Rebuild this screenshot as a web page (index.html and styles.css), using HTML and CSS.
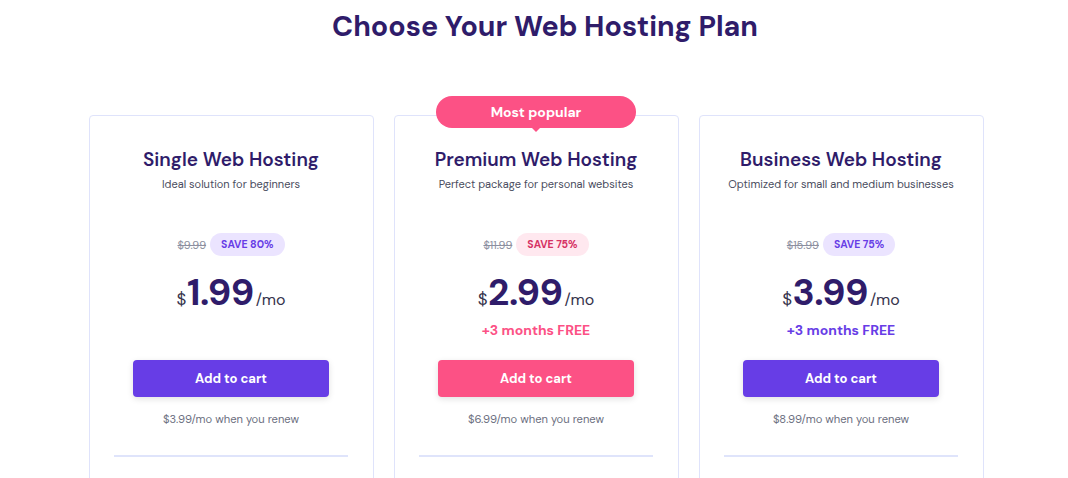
FILE: index.html
```html
<!DOCTYPE html>
<html lang="en">
  <head>
    <meta charset="UTF-8" />
    <meta name="viewport" content="width=device-width, initial-scale=1.0" />
    <title>Web Hosting Plans</title>
    <link rel="stylesheet" href="styles.css">
  </head>
  <body>
    <h1 class="page-title">Choose Your Web Hosting Plan</h1>

    <div class="plans">
      <div class="plan">
        <h2>Single Web Hosting</h2>
        <p class="tagline">Ideal solution for beginners</p>
        <div class="old-price">
          <s>$9.99</s>
          <span class="save">SAVE 80%</span>
        </div>
        <div class="price"><span class="cur">$</span>1.99<span class="per">/mo</span></div>
        <div class="bonus"></div>
        <a href="#" class="button">Add to cart</a>
        <p class="renew">$3.99/mo when you renew</p>
        <hr class="divider">
      </div>

      <div class="plan popular">
        <div class="badge">Most popular</div>
        <h2>Premium Web Hosting</h2>
        <p class="tagline">Perfect package for personal websites</p>
        <div class="old-price">
          <s>$11.99</s>
          <span class="save">SAVE 75%</span>
        </div>
        <div class="price"><span class="cur">$</span>2.99<span class="per">/mo</span></div>
        <div class="bonus">+3 months FREE</div>
        <a href="#" class="button">Add to cart</a>
        <p class="renew">$6.99/mo when you renew</p>
        <hr class="divider">
      </div>

      <div class="plan">
        <h2>Business Web Hosting</h2>
        <p class="tagline">Optimized for small and medium businesses</p>
        <div class="old-price">
          <s>$15.99</s>
          <span class="save">SAVE 75%</span>
        </div>
        <div class="price"><span class="cur">$</span>3.99<span class="per">/mo</span></div>
        <div class="bonus">+3 months FREE</div>
        <a href="#" class="button">Add to cart</a>
        <p class="renew">$8.99/mo when you renew</p>
        <hr class="divider">
      </div>
    </div>
  </body>
</html>
```

FILE: styles.css
```css
/* Global */
body {
  font-family: "DM Sans", Inter, "Noto Sans", sans-serif;
  margin: 0;
  padding: 0;
  background-color: #fff;
  color: #2f1c6a;
  text-align: center;
}

/* Heading */
.page-title {
  margin: 9px 0 0;
  padding-left: 22px;
  font-size: 28.6px;
  line-height: 36px;
  font-weight: 700;
  color: #2f1c6a;
}

/* Plan cards */
.plans {
  display: flex;
  justify-content: center;
  gap: 20px;
  margin-top: 70px;
  padding-left: 4px;
}

.plan {
  position: relative;
  width: 285px;
  height: 400px;
  box-sizing: border-box;
  padding-top: 32px;
  border: 1px solid #dfe3fb;
  border-radius: 4px;
  display: flex;
  flex-direction: column;
  align-items: center;
}

.plan h2 {
  margin: 0;
  font-size: 19px;
  line-height: 24px;
  font-weight: 600;
  color: #2f1c6a;
}

.tagline {
  margin: 4px 0 0;
  font-size: 11px;
  line-height: 16px;
  color: #4a4d60;
}

/* Badge */
.badge {
  position: absolute;
  top: -20px;
  left: 50%;
  transform: translateX(-50%);
  width: 200px;
  height: 32px;
  line-height: 32px;
  border-radius: 16px;
  background-color: #fc5185;
  color: #fff;
  font-size: 14px;
  font-weight: 700;
}

.badge::after {
  content: "";
  position: absolute;
  left: 50%;
  bottom: -4px;
  margin-left: -4px;
  border-left: 4px solid transparent;
  border-right: 4px solid transparent;
  border-top: 4px solid #fc5185;
}

/* Prices */
.old-price {
  margin-top: 41px;
  display: flex;
  align-items: center;
  gap: 4px;
  height: 23px;
}

.old-price s {
  font-size: 11px;
  color: #8c8fa0;
}

.save {
  display: inline-block;
  height: 23px;
  line-height: 23px;
  padding: 0 11px;
  border-radius: 12px;
  background-color: #ebe4ff;
  color: #673de6;
  font-size: 10.5px;
  font-weight: 700;
}

.popular .save {
  background-color: #ffe8ef;
  color: #d63163;
}

.price {
  margin-top: 14px;
  font-size: 37px;
  line-height: 44px;
  font-weight: 700;
  color: #2f1c6a;
  letter-spacing: -0.5px;
}

.price .cur {
  font-size: 17px;
  font-weight: 400;
  color: #36344d;
  margin-right: 1px;
}

.price .per {
  font-size: 16px;
  font-weight: 400;
  color: #36344d;
  margin-left: 2px;
  letter-spacing: 0;
}

.bonus {
  margin-top: -1px;
  height: 18px;
  font-size: 14px;
  line-height: 18px;
  font-weight: 700;
  color: #673de6;
}

.popular .bonus {
  color: #fc5185;
}

/* Button */
.button {
  margin-top: 21px;
  display: block;
  width: 196px;
  height: 37px;
  line-height: 37px;
  border-radius: 4px;
  background-color: #673de6;
  color: #fff;
  text-decoration: none;
  font-size: 13px;
  font-weight: 700;
  box-shadow: 0 2px 6px rgba(0, 0, 0, 0.12);
}

.popular .button {
  background-color: #fc5185;
}

.renew {
  margin: 14px 0 0;
  font-size: 11.2px;
  line-height: 16px;
  color: #6d7081;
}

.divider {
  margin: 28px 0 0;
  width: 234px;
  height: 2px;
  border: none;
  background-color: #dfe4fb;
}
```
